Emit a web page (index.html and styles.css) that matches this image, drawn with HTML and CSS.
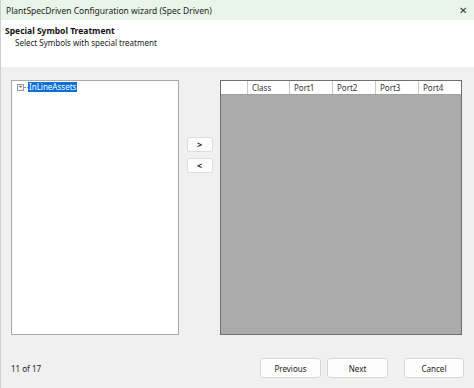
FILE: index.html
```html
<!DOCTYPE html>
<html lang="en">
<head>
    <meta charset="UTF-8">
    <title>PlantSpecDriven Configuration wizard</title>
    <link rel="stylesheet" href="styles.css">
</head>
<body>
    <div class="window">
        <div class="titlebar">
            <span class="title">PlantSpecDriven Configuration wizard (Spec Driven)</span>
            <span class="close">✕</span>
        </div>

        <div class="header">
            <div class="page-title">Special Symbol Treatment</div>
            <div class="page-sub">Select Symbols with special treatment</div>
        </div>

        <div class="content">
            <div class="panels">
                <div class="tree">
                    <div class="node">
                        <span class="expander">+</span>
                        <span class="dots"></span>
                        <span class="label selected">InLineAssets</span>
                    </div>
                </div>

                <div class="move-buttons">
                    <button class="small-btn">&gt;</button>
                    <button class="small-btn">&lt;</button>
                </div>

                <div class="grid">
                    <div class="grid-header">
                        <div class="cell corner"></div>
                        <div class="cell">Class</div>
                        <div class="cell">Port1</div>
                        <div class="cell">Port2</div>
                        <div class="cell">Port3</div>
                        <div class="cell">Port4</div>
                    </div>
                    <div class="grid-body"></div>
                </div>
            </div>

            <div class="footer">
                <span class="step">11 of 17</span>
                <div class="nav">
                    <button class="btn">Previous</button>
                    <button class="btn">Next</button>
                    <button class="btn cancel">Cancel</button>
                </div>
            </div>
        </div>
    </div>
</body>
</html>
```

FILE: styles.css
```css
* {
    box-sizing: border-box;
}
body {
    margin: 0;
    font-family: "Noto Sans", "Open Sans", sans-serif;
    font-size: 8px;
    color: #1a1a1a;
    background: #f0f0f0;
}
.window {
    width: 474px;
    height: 388px;
    display: flex;
    flex-direction: column;
    background: #f0f0f0;
    border-left: 1px solid #cfcfcf;
}
.titlebar {
    height: 20px;
    background: #eaf5e9;
    display: flex;
    align-items: center;
    justify-content: space-between;
    padding: 0 7px 0 5px;
}
.title {
    font-size: 8.5px;
    color: #222;
}
.close {
    font-size: 10px;
    color: #333;
}
.header {
    height: 47px;
    background: #fff;
    padding: 5px 4px;
}
.page-title {
    font-weight: bold;
    font-size: 8.5px;
    color: #111;
}
.page-sub {
    margin-top: 1px;
    padding-left: 10px;
    font-size: 8px;
    color: #222;
}
.content {
    flex: 1;
    display: flex;
    flex-direction: column;
    padding: 13px 10px 0 10px;
}
.panels {
    display: flex;
    height: 255px;
}
.tree {
    width: 168px;
    background: #fff;
    border: 1px solid #a8a8a8;
    padding: 1px 5px;
}
.node {
    display: flex;
    align-items: center;
    height: 10px;
}
.expander {
    width: 7px;
    height: 7px;
    border: 1px solid #999;
    font-size: 6px;
    line-height: 5px;
    text-align: center;
    color: #333;
    background: #f4f4f4;
}
.dots {
    width: 4px;
    border-top: 1px dotted #999;
}
.label {
    padding: 0 1px;
    font-size: 8px;
    line-height: 10px;
}
.selected {
    background: #0a6fd8;
    color: #fff;
}
.move-buttons {
    width: 41px;
    display: flex;
    flex-direction: column;
    align-items: center;
    padding-top: 57px;
    gap: 6px;
}
.small-btn {
    width: 26px;
    height: 15px;
    padding: 0;
    background: #fdfdfd;
    border: 1px solid #dcdcdc;
    border-radius: 3px;
    font-family: inherit;
    font-size: 9px;
    font-weight: bold;
    color: #222;
}
.grid {
    width: 242px;
    display: flex;
    flex-direction: column;
    border: 1px solid #6e6e6e;
    background: #ababab;
}
.grid-header {
    display: grid;
    grid-template-columns: 27px 42px 43px 43px 43px 1fr;
    height: 14px;
    background: #fff;
    border-bottom: 1px solid #a0a0a0;
}
.cell {
    border-right: 1px solid #c8c8c8;
    padding-left: 4px;
    line-height: 13px;
    font-size: 8px;
    color: #333;
}
.cell:last-child {
    border-right: none;
}
.grid-body {
    flex: 1;
}
.footer {
    display: flex;
    align-items: center;
    justify-content: space-between;
    margin-top: 23px;
    height: 20px;
}
.step {
    font-size: 8px;
    color: #222;
}
.nav {
    display: flex;
    gap: 6px;
}
.btn {
    width: 61px;
    height: 20px;
    background: #fdfdfd;
    border: 1px solid #d6d6d6;
    border-radius: 3px;
    font-family: inherit;
    font-size: 8px;
    color: #222;
}
.cancel {
    width: 60px;
    margin-left: 10px;
}
```
